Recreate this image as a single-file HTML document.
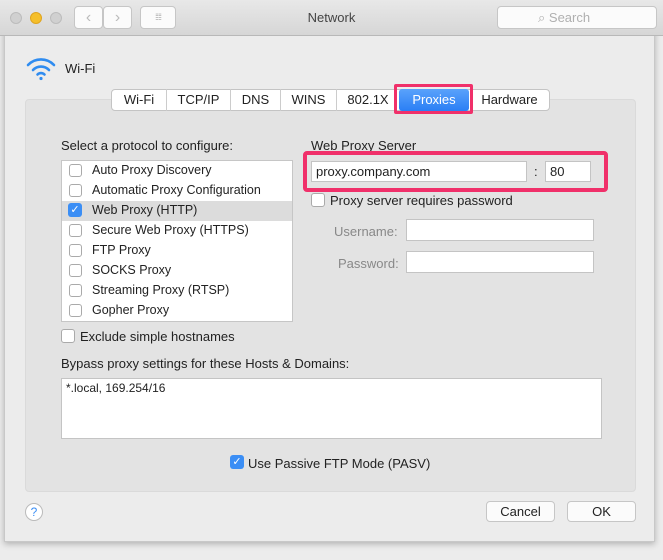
<!DOCTYPE html>
<html><head><style>
*{box-sizing:border-box;margin:0;padding:0}
body{width:663px;height:560px;background:#ececec;font-family:"Liberation Sans",sans-serif;font-size:12.5px;color:#222;position:relative;overflow:hidden}
.a{position:absolute}
.win{left:4px;top:0;width:651px;height:542px;background:#ececec;border:1px solid #c8c8c8;border-top:none;box-shadow:0 2px 6px rgba(0,0,0,.25)}
.tb{left:0;top:0;width:663px;height:36px;background:linear-gradient(#e8e8e8,#d6d6d6);border-bottom:1px solid #b8b8b8}
.dot{width:12px;height:12px;border-radius:50%;top:12px;background:#d0d0d0;border:1px solid #bcbcbc}
.btn{background:#fbfbfb;border:1px solid #c6c6c6;border-radius:4px}
.inner{left:25px;top:99px;width:611px;height:393px;background:#e3e3e3;border-radius:4px;border:1px solid #dadada}
.tab{top:89px;height:22px;line-height:21px;text-align:center;font-size:13px;border-right:1px solid #ccc}
.cb{width:13px;height:13px;border:1px solid #aaa;border-radius:3px;background:#fff}
.cbc{width:14px;height:14px;border-radius:3px;background:#3b8ef5;color:#fff;font-size:11px;line-height:14px;text-align:center}
.inp{background:#fff;border:1px solid #c4c4c4}
.li{left:62px;width:231px;height:20px;line-height:20px}
</style></head><body>
<div class="a win"></div>
<div class="a tb"></div>
<div class="a dot" style="left:10px"></div>
<div class="a dot" style="left:30px;background:#f5bf2a;border-color:#dfa41f"></div>
<div class="a dot" style="left:50px"></div>
<div class="a btn" style="left:74px;top:6px;width:29px;height:23px;color:#bbb;text-align:center;line-height:21px;font-size:16px">‹</div>
<div class="a btn" style="left:103px;top:6px;width:29px;height:23px;color:#bbb;text-align:center;line-height:21px;font-size:16px">›</div>
<div class="a btn" style="left:140px;top:6px;width:36px;height:23px;color:#aaa;text-align:center;line-height:21px;font-size:9px;letter-spacing:-1px">⁞⁞⁞⁞</div>
<div class="a" style="left:0;width:663px;top:10px;text-align:center;font-size:13px;color:#444">Network</div>
<div class="a btn" style="left:497px;top:6px;width:160px;height:23px;color:#b0b0b0;font-size:13px;line-height:21px;padding-left:40px">⌕ Search</div>
<svg class="a" style="left:25px;top:57px" width="32" height="24" viewBox="0 0 32 24"><g fill="none" stroke="#2f8cf0" stroke-width="2.6" stroke-linecap="round"><path d="M3 8a18 18 0 0 1 26 0"/><path d="M8 13a11 11 0 0 1 16 0"/><path d="M12.5 17.5a5 5 0 0 1 7 0"/></g><circle cx="16" cy="21.5" r="1.6" fill="#2f8cf0"/></svg>
<div class="a" style="left:65px;top:61px;font-size:13px">Wi-Fi</div>
<div class="a inner"></div>
<div class="a" style="left:111px;top:89px;width:439px;height:22px;background:#fff;border:1px solid #c4c4c4;border-radius:4px"></div>
<div class="a tab" style="left:112px;width:55px">Wi-Fi</div>
<div class="a tab" style="left:167px;width:64px">TCP/IP</div>
<div class="a tab" style="left:231px;width:50px">DNS</div>
<div class="a tab" style="left:281px;width:56px">WINS</div>
<div class="a tab" style="left:337px;width:62px;border:none">802.1X</div>
<div class="a" style="left:394px;top:84px;width:79px;height:30px;border:3px solid #f0306a;border-radius:2px"></div>
<div class="a tab" style="left:399px;top:89px;width:70px;background:linear-gradient(#5aa2fb,#2a7ff5);color:#fff;border:none;border-radius:3px">Proxies</div>
<div class="a tab" style="left:470px;width:79px;border:none">Hardware</div>
<div class="a" style="left:61px;top:138px;font-size:13px">Select a protocol to configure:</div>
<div class="a" style="left:61px;top:160px;width:232px;height:162px;background:#fff;border:1px solid #c6c6c6"></div>
<div class="a" style="left:62px;top:201px;width:230px;height:20px;background:#dcdcdc"></div>
<div class="a li" style="top:160px"><span class="a cb" style="left:7px;top:4px"></span><span class="a" style="left:30px">Auto Proxy Discovery</span></div>
<div class="a li" style="top:180px"><span class="a cb" style="left:7px;top:4px"></span><span class="a" style="left:30px">Automatic Proxy Configuration</span></div>
<div class="a li" style="top:200px"><span class="a cbc" style="left:6px;top:3px">✓</span><span class="a" style="left:30px">Web Proxy (HTTP)</span></div>
<div class="a li" style="top:220px"><span class="a cb" style="left:7px;top:4px"></span><span class="a" style="left:30px">Secure Web Proxy (HTTPS)</span></div>
<div class="a li" style="top:240px"><span class="a cb" style="left:7px;top:4px"></span><span class="a" style="left:30px">FTP Proxy</span></div>
<div class="a li" style="top:260px"><span class="a cb" style="left:7px;top:4px"></span><span class="a" style="left:30px">SOCKS Proxy</span></div>
<div class="a li" style="top:280px"><span class="a cb" style="left:7px;top:4px"></span><span class="a" style="left:30px">Streaming Proxy (RTSP)</span></div>
<div class="a li" style="top:300px"><span class="a cb" style="left:7px;top:4px"></span><span class="a" style="left:30px">Gopher Proxy</span></div>
<div class="a cb" style="left:61px;top:329px;width:14px;height:14px"></div>
<div class="a" style="left:80px;top:329px;font-size:13px">Exclude simple hostnames</div>
<div class="a" style="left:61px;top:356px;font-size:13px">Bypass proxy settings for these Hosts &amp; Domains:</div>
<div class="a inp" style="left:61px;top:378px;width:541px;height:61px;padding:2px 4px;font-size:12px">*.local, 169.254/16</div>
<div class="a" style="left:311px;top:138px;font-size:13px">Web Proxy Server</div>
<div class="a" style="left:303px;top:151px;width:305px;height:41px;border:4px solid #f0306a;border-radius:4px"></div>
<div class="a inp" style="left:311px;top:161px;width:216px;height:21px;line-height:19px;padding-left:4px;font-size:13px">proxy.company.com</div>
<div class="a" style="left:534px;top:164px;font-size:13px">:</div>
<div class="a inp" style="left:545px;top:161px;width:46px;height:21px;line-height:19px;padding-left:4px;font-size:13px">80</div>
<div class="a cb" style="left:311px;top:193px;width:14px;height:14px"></div>
<div class="a" style="left:330px;top:193px;font-size:13px">Proxy server requires password</div>
<div class="a" style="left:334px;top:224px;font-size:13px;color:#888">Username:</div>
<div class="a inp" style="left:406px;top:219px;width:188px;height:22px"></div>
<div class="a" style="left:338px;top:256px;font-size:13px;color:#888">Password:</div>
<div class="a inp" style="left:406px;top:251px;width:188px;height:22px"></div>
<div class="a cbc" style="left:230px;top:455px">✓</div>
<div class="a" style="left:248px;top:456px;font-size:13px">Use Passive FTP Mode (PASV)</div>
<div class="a" style="left:25px;top:503px;width:18px;height:18px;border-radius:50%;background:#fff;border:1px solid #bbb;color:#3b8ef5;text-align:center;line-height:16px;font-size:12px">?</div>
<div class="a btn" style="left:486px;top:501px;width:69px;height:21px;text-align:center;line-height:19px;font-size:13px;border-radius:4px">Cancel</div>
<div class="a btn" style="left:567px;top:501px;width:69px;height:21px;text-align:center;line-height:19px;font-size:13px;border-radius:4px">OK</div>
</body></html>
